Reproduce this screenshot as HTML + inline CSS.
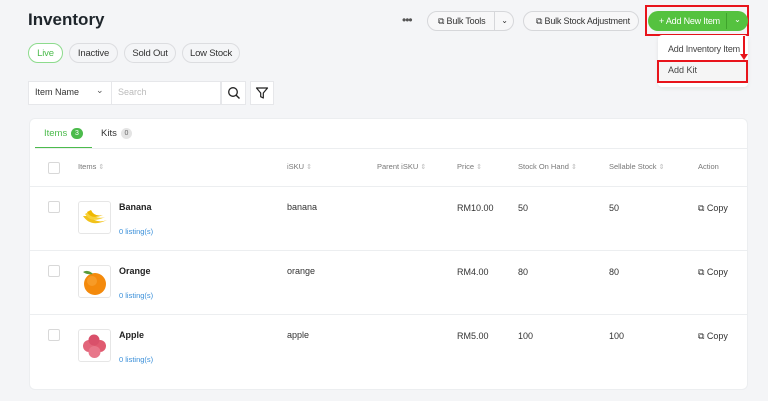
<!DOCTYPE html>
<html><head><meta charset="utf-8"><style>
*{box-sizing:border-box;margin:0;padding:0}
body{width:768px;height:401px;background:#f4f5f7;font-family:"Liberation Sans",Arial,sans-serif;position:relative;overflow:hidden;color:#222;white-space:nowrap}
.a{position:absolute}
.pill{position:absolute;top:43px;height:20px;border:1px solid #dcdde0;border-radius:10px;font-size:9.5px;display:flex;align-items:center;justify-content:center;color:#333;background:#f4f5f7;letter-spacing:-.2px}
.btn{position:absolute;top:11px;height:20px;border:1px solid #d6d7da;border-radius:10px;background:#f7f7f8;font-size:9px;line-height:18px;color:#333;letter-spacing:-.2px}
.th{position:absolute;top:162px;font-size:7.5px;color:#777}
.td{position:absolute;font-size:9px;color:#333}
.cb{position:absolute;left:48px;width:12px;height:12px;border:1px solid #d8d8d8;border-radius:2px;background:#fff}
.img{position:absolute;left:78px;width:33px;height:33px;border:1px solid #e6e6e6;border-radius:3px;background:#fff}
.nm{position:absolute;left:119px;font-size:9px;font-weight:bold;color:#222}
.ls{position:absolute;left:119px;font-size:7.5px;color:#3a8fd9}
.line{position:absolute;left:29px;width:719px;height:1px;background:#eceef0}
.srt{color:#bbb;font-size:7px}
</style></head><body>
<div class="a" style="left:28px;top:10px;font-size:17px;font-weight:bold;color:#1e252b">Inventory</div>
<div class="pill" style="left:28px;width:35px;border-color:#8ddb8d;color:#4cbb4c;background:#fff">Live</div>
<div class="pill" style="left:69px;width:49px">Inactive</div>
<div class="pill" style="left:124px;width:52px">Sold Out</div>
<div class="pill" style="left:182px;width:58px">Low Stock</div>

<div class="a" style="left:402px;top:13px;font-size:12px;color:#555;letter-spacing:-1px">•••</div>
<div class="btn" style="left:427px;width:87px"><span style="position:absolute;left:10px">⧉ Bulk Tools</span><span style="position:absolute;left:66px;top:0;width:20px;height:18px;border-left:1px solid #d6d7da;text-align:center;font-size:8px">⌄</span></div>
<div class="btn" style="left:523px;width:116px;padding-left:12px">⧉ Bulk Stock Adjustment</div>
<div class="a" style="left:645px;top:5px;width:104px;height:31px;border:2px solid #e8141b"></div>
<div class="a" style="left:648px;top:11px;width:100px;height:20px;border-radius:10px;background:#55c23f;color:#fff;font-size:9px;line-height:20px;padding-left:11px;letter-spacing:-.2px">+ Add New Item</div>
<div class="a" style="left:726px;top:13px;height:16px;width:22px;border-left:1px solid #3fa32c;color:#fff;text-align:center;font-size:8px;line-height:14px">⌄</div>
<div class="a" style="left:658px;top:35px;width:90px;height:52px;background:#fff;border-radius:4px;box-shadow:0 1px 4px rgba(0,0,0,.08)"></div>
<div class="a" style="left:668px;top:44px;font-size:9px;color:#444;letter-spacing:-.2px">Add Inventory Item</div>
<div class="a" style="left:657px;top:60px;width:91px;height:23px;border:2px solid #e8141b;background:#f5f5f5"></div>
<div class="a" style="left:668px;top:65px;font-size:9px;color:#444">Add Kit</div>
<div class="a" style="left:743px;top:36px;width:2px;height:20px;background:#e8141b"></div>
<div class="a" style="left:740px;top:54px;width:0;height:0;border-left:4px solid transparent;border-right:4px solid transparent;border-top:6px solid #e8141b"></div>

<div class="a" style="left:28px;top:81px;width:193px;height:24px;background:#fff;border:1px solid #e6e7ea"></div>
<div class="a" style="left:35px;top:87px;font-size:9px;color:#333">Item Name</div>
<div class="a" style="left:96px;top:85px;font-size:9px;color:#555">⌄</div>
<div class="a" style="left:111px;top:81px;width:1px;height:24px;background:#e6e7ea"></div>
<div class="a" style="left:118px;top:87px;font-size:9px;color:#bbb">Search</div>
<div class="a" style="left:221px;top:81px;width:25px;height:24px;background:#fff;border:1px solid #e6e7ea"></div>
<svg class="a" style="left:227px;top:86px" width="14" height="14" viewBox="0 0 14 14"><circle cx="6" cy="6" r="4.3" fill="none" stroke="#222" stroke-width="1.3"/><path d="M9.2 9.2L12.5 12.5" stroke="#222" stroke-width="1.4"/></svg>
<div class="a" style="left:250px;top:81px;width:24px;height:24px;background:#fff;border:1px solid #e6e7ea"></div>
<svg class="a" style="left:255px;top:86px" width="14" height="14" viewBox="0 0 14 14"><path d="M1.5 2h11l-4.2 5v5l-2.6-1.3V7z" fill="none" stroke="#222" stroke-width="1.2" stroke-linejoin="round"/></svg>

<div class="a" style="left:29px;top:118px;width:719px;height:272px;background:#fff;border-radius:6px;border:1px solid #eceef0"></div>
<div class="a" style="left:44px;top:128px;font-size:9.5px;color:#4cbb4c">Items</div>
<div class="a" style="left:71px;top:128px;width:12px;height:11px;border-radius:6px;background:#4cbb4c;color:#fff;font-size:7px;text-align:center;line-height:11px">3</div>
<div class="a" style="left:101px;top:128px;font-size:9.5px;color:#333">Kits</div>
<div class="a" style="left:121px;top:128px;width:11px;height:11px;border-radius:6px;background:#e4e4e4;color:#666;font-size:7px;text-align:center;line-height:11px">0</div>
<div class="a" style="left:35px;top:147px;width:57px;height:2px;background:#4cbb4c"></div>
<div class="line" style="top:148px;left:35px;width:713px"></div>

<div class="cb" style="top:162px"></div>
<div class="th" style="left:78px">Items <span class="srt">⇕</span></div>
<div class="th" style="left:287px">iSKU <span class="srt">⇕</span></div>
<div class="th" style="left:377px">Parent iSKU <span class="srt">⇕</span></div>
<div class="th" style="left:457px">Price <span class="srt">⇕</span></div>
<div class="th" style="left:518px">Stock On Hand <span class="srt">⇕</span></div>
<div class="th" style="left:609px">Sellable Stock <span class="srt">⇕</span></div>
<div class="th" style="left:698px">Action</div>
<div class="line" style="top:186px"></div>

<div class="cb" style="top:201px"></div>
<div class="img" style="top:201px"><svg width="31" height="31" viewBox="0 0 31 31"><path d="M4 14q8 12 24 4q-10 4-18-4z" fill="#f2c21a"/><path d="M6 12q6 10 20 3q-10 3-15-6z" fill="#f7d23a"/><path d="M8 10q4 8 16 3q-9 2-12-5z" fill="#f0b800"/></svg></div>
<div class="nm" style="top:202px">Banana</div><div class="ls" style="top:227px">0 listing(s)</div>
<div class="td" style="left:287px;top:202px">banana</div>
<div class="td" style="left:457px;top:203px">RM10.00</div>
<div class="td" style="left:518px;top:203px">50</div>
<div class="td" style="left:609px;top:203px">50</div>
<div class="td" style="left:698px;top:203px">⧉ Copy</div>
<div class="line" style="top:250px"></div>

<div class="cb" style="top:265px"></div>
<div class="img" style="top:265px"><svg width="31" height="31" viewBox="0 0 31 31"><circle cx="16" cy="18" r="11" fill="#f48a0c"/><circle cx="13" cy="15" r="5" fill="#f9a63a" opacity=".6"/><path d="M4 6q5-3 10 2q-6 1-10-2z" fill="#5a9a3a"/></svg></div>
<div class="nm" style="top:266px">Orange</div><div class="ls" style="top:291px">0 listing(s)</div>
<div class="td" style="left:287px;top:266px">orange</div>
<div class="td" style="left:457px;top:267px">RM4.00</div>
<div class="td" style="left:518px;top:267px">80</div>
<div class="td" style="left:609px;top:267px">80</div>
<div class="td" style="left:698px;top:267px">⧉ Copy</div>
<div class="line" style="top:314px"></div>

<div class="cb" style="top:329px"></div>
<div class="img" style="top:329px"><svg width="31" height="31" viewBox="0 0 31 31"><circle cx="10" cy="16" r="6" fill="#e2657a"/><circle cx="21" cy="16" r="6" fill="#e05a70"/><circle cx="15" cy="10" r="5.5" fill="#d9506a"/><circle cx="15.5" cy="22" r="6" fill="#e8768a"/></svg></div>
<div class="nm" style="top:330px">Apple</div><div class="ls" style="top:355px">0 listing(s)</div>
<div class="td" style="left:287px;top:330px">apple</div>
<div class="td" style="left:457px;top:331px">RM5.00</div>
<div class="td" style="left:518px;top:331px">100</div>
<div class="td" style="left:609px;top:331px">100</div>
<div class="td" style="left:698px;top:331px">⧉ Copy</div>
</body></html>
